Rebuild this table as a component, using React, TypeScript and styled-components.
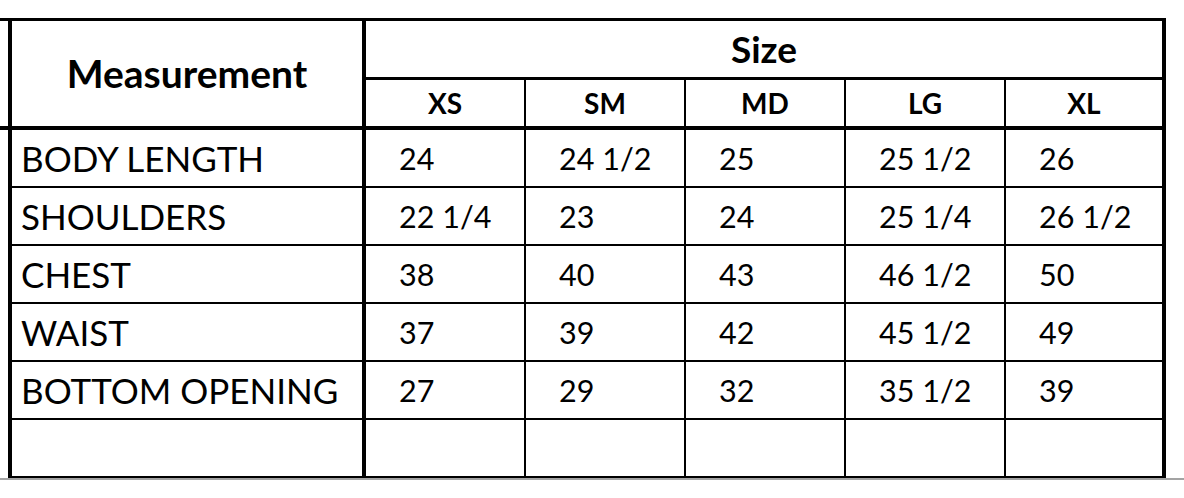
import React from "react";
import styled, { createGlobalStyle } from "styled-components";

const GlobalStyle = createGlobalStyle`
	html,
	body {
		margin: 0;
		padding: 0;
		background: #ffffff;
	}

	body {
		font-family: Lato, "Liberation Sans", sans-serif;
		color: #000000;
	}
`;

const Page = styled.div`
	width: 1184px;
	height: 498px;
	overflow: hidden;
	padding-top: 18px;
	box-sizing: border-box;
	background: #ffffff;
`;

const Chart = styled.div`
	display: grid;
	grid-template-columns: 8px 358px repeat(5, 160px);
	grid-template-rows: 62px 50px repeat(6, 58px);
	width: 1166px;
`;

const PageEdge = styled.div`
	height: 2px;
	width: 100%;
	background: #a3a3a3;
`;

interface CellProps {
	$top?: number;
	$right?: number;
	$bottom?: number;
	$left?: number;
	$rows?: number;
	$cols?: number;
}

const Cell = styled.div<CellProps>`
	box-sizing: border-box;
	display: flex;
	align-items: center;
	border-style: solid;
	border-color: #000000;
	border-width: ${({ $top = 0, $right = 0, $bottom = 0, $left = 0 }) =>
		`${$top}px ${$right}px ${$bottom}px ${$left}px`};
	${({ $rows }) => $rows && `grid-row: span ${$rows};`}
	${({ $cols }) => $cols && `grid-column: span ${$cols};`}
	white-space: nowrap;
`;

const TitleCell = styled(Cell)<{ $size: number }>`
	justify-content: center;
	font-weight: 700;
	font-size: ${({ $size }) => $size}px;
	padding-bottom: 2px;
`;

const SizeCell = styled(Cell)`
	justify-content: center;
	font-weight: 700;
	font-size: 28px;
`;

const LabelCell = styled(Cell)`
	padding-left: 9px;
	font-size: 35px;
`;

const ValueCell = styled(Cell)`
	padding-left: 33px;
	font-size: 30.5px;
`;

const sizes = ["XS", "SM", "MD", "LG", "XL"];

const rows: [string, string[]][] = [
	["BODY LENGTH", ["24", "24 1/2", "25", "25 1/2", "26"]],
	["SHOULDERS", ["22 1/4", "23", "24", "25 1/4", "26 1/2"]],
	["CHEST", ["38", "40", "43", "46 1/2", "50"]],
	["WAIST", ["37", "39", "42", "45 1/2", "49"]],
	["BOTTOM OPENING", ["27", "29", "32", "35 1/2", "39"]],
	["", ["", "", "", "", ""]],
];

const edge = (index: number) => (index === sizes.length - 1 ? 4 : 2);

const App: React.FC = () => (
	<>
		<GlobalStyle />
		<Page>
			<Chart>
				<Cell $rows={2} $top={3} $bottom={4} />
				<TitleCell
					$size={39}
					$rows={2}
					$top={3}
					$left={4}
					$right={4}
					$bottom={4}
				>
					Measurement
				</TitleCell>
				<TitleCell $size={37} $cols={5} $top={3} $right={4} $bottom={3}>
					Size
				</TitleCell>
				{sizes.map((size, i) => (
					<SizeCell key={size} $right={edge(i)} $bottom={4}>
						{size}
					</SizeCell>
				))}
				<Cell $rows={rows.length} />
				{rows.map(([label, values], r) => (
					<React.Fragment key={r}>
						<LabelCell $left={4} $right={4} $bottom={2}>
							{label}
						</LabelCell>
						{values.map((value, i) => (
							<ValueCell key={i} $right={edge(i)} $bottom={2}>
								{value}
							</ValueCell>
						))}
					</React.Fragment>
				))}
			</Chart>
			<PageEdge />
		</Page>
	</>
);

export default App;
